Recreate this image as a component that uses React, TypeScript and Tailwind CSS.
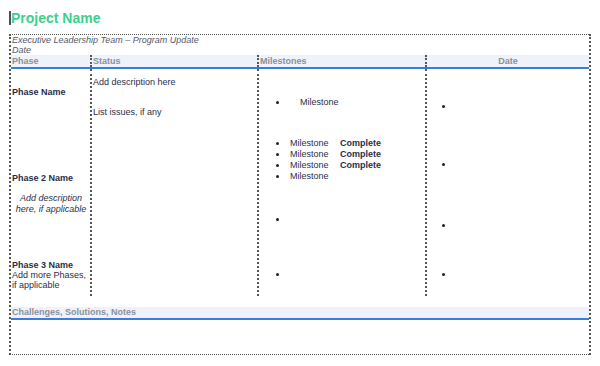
import React from 'react';

const Dot: React.FC = () => (
  <span className="inline-block w-[3px] h-[3px] rounded-full bg-[#1c1f33]" />
);

const MilestoneRow: React.FC<{ done?: boolean }> = ({ done }) => (
  <div className="flex items-center h-[11px]">
    <Dot />
    <span className="ml-[11px] w-[50px]">Milestone</span>
    {done && <span className="font-bold">Complete</span>}
  </div>
);

const App: React.FC = () => {
  return (
    <div className="w-[600px] h-[366px] bg-white font-['Liberation_Sans',Arial,sans-serif] text-[9px] text-[#2b2e48]">
      <div className="flex items-center pt-[10px] pl-[9px] h-[34px]">
        <span className="inline-block w-[2px] h-[14px] bg-[#4a4f55] mb-[8px]" />
        <h1 className="text-[14px] leading-[18px] font-bold text-[#3ccf8d] mb-[8px]">Project Name</h1>
      </div>

      <div className="ml-[9px] w-[582px] h-[321px] border-t border-b border-l-2 border-r-2 border-dotted border-[#555] flex flex-col">
        <div className="italic text-[#55586a] leading-[10px] pl-[1px]">
          <p>Executive Leadership Team – Program Update</p>
          <p>Date</p>
        </div>

        {/* header */}
        <div className="flex h-[14px] bg-[#eef3fb] border-b-2 border-[#3b7ddb] font-bold text-[#8c8f99] leading-[13px]">
          <div className="w-[79px] pl-[1px]">Phase</div>
          <div className="w-[167px] border-l-2 border-dotted border-[#555] pl-[1px]">Status</div>
          <div className="w-[168px] border-l-2 border-dotted border-[#555] pl-[1px]">Milestones</div>
          <div className="flex-1 border-l-2 border-dotted border-[#555] text-center">Date</div>
        </div>

        {/* body */}
        <div className="flex h-[227px] leading-[11px]">
          <div className="w-[79px] flex flex-col pl-[1px]">
            <p className="mt-[18px] font-bold">Phase Name</p>
            <p className="mt-[75px] font-bold">Phase 2 Name</p>
            <p className="mt-[9px] italic text-center">Add description<br />here, if applicable</p>
            <div className="mt-[45px] leading-[10px]">
              <p className="font-bold">Phase 3 Name</p>
              <p>Add more Phases,<br />if applicable</p>
            </div>
          </div>

          <div className="w-[167px] border-l-2 border-dotted border-[#555] flex flex-col pl-[1px]">
            <p className="mt-[8px]">Add description here</p>
            <p className="mt-[19px]">List issues, if any</p>
          </div>

          <div className="w-[168px] border-l-2 border-dotted border-[#555] flex flex-col pl-[17px]">
            <div className="mt-[28px] flex items-center h-[11px]">
              <Dot />
              <span className="ml-[21px]">Milestone</span>
            </div>
            <div className="mt-[30px] flex flex-col">
              <MilestoneRow done />
              <MilestoneRow done />
              <MilestoneRow done />
              <MilestoneRow />
            </div>
            <div className="mt-[32px] flex items-center h-[11px]"><Dot /></div>
            <div className="mt-[44px] flex items-center h-[11px]"><Dot /></div>
          </div>

          <div className="flex-1 border-l-2 border-dotted border-[#555] flex flex-col pl-[15px]">
            <div className="mt-[32px] flex items-center h-[11px]"><Dot /></div>
            <div className="mt-[47px] flex items-center h-[11px]"><Dot /></div>
            <div className="mt-[50px] flex items-center h-[11px]"><Dot /></div>
            <div className="mt-[38px] flex items-center h-[11px]"><Dot /></div>
          </div>
        </div>

        {/* notes */}
        <div className="mt-[11px] h-[13px] bg-[#eef3fb] border-b-2 border-[#3b7ddb] font-bold text-[#8c8f99] leading-[11px] pl-[1px]">
          Challenges, Solutions, Notes
        </div>
        <div className="flex-1" />
      </div>
    </div>
  );
};

export default App;
